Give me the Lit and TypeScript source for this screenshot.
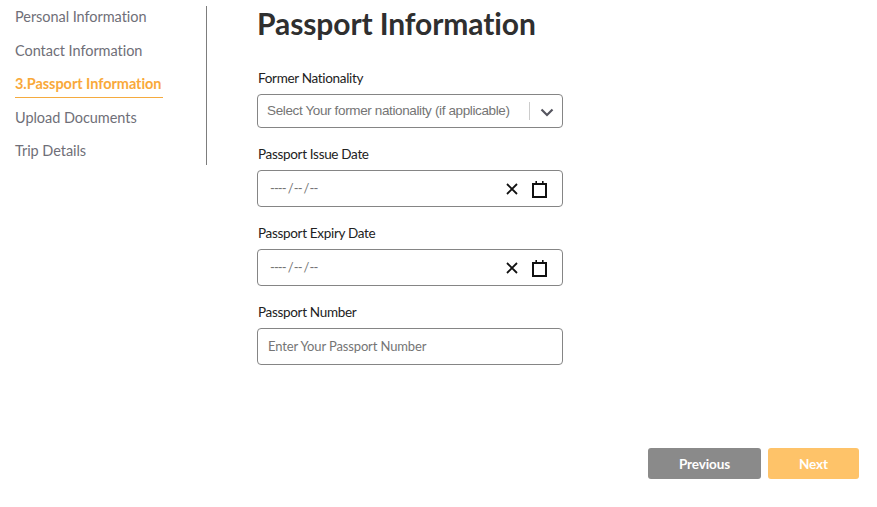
import { LitElement, html, css } from "lit";
import { customElement } from "lit/decorators.js";

const dateField = html`
  <span class="ph">----<span class="sl">/</span>--<span class="sl">/</span>--</span>
  <svg class="x" width="12" height="12" viewBox="0 0 12 12"><path d="M1 1l10 10M11 1L1 11" stroke="#111" stroke-width="1.8" fill="none"/></svg>
  <svg class="cal" width="15" height="17" viewBox="0 0 15 17"><path d="M1 3h13v13H1z" stroke="#111" stroke-width="2" fill="none"/><path d="M4.2 0v3M10.8 0v3" stroke="#111" stroke-width="1.6" fill="none"/></svg>
`;

@customElement("app-root")
export class AppRoot extends LitElement {
  static styles = css`
    :host { display: block; width: 877px; height: 507px; background: #fff; font-family: Lato, sans-serif; overflow: hidden; }
    .page { display: flex; align-items: flex-start; padding: 6px 0 0 0; height: 501px; box-sizing: border-box; }
    .side { width: 207px; height: 159px; box-sizing: border-box; border-right: 1px solid #7d7d7d; padding: 0 0 0 15px; display: flex; flex-direction: column; flex: none; }
    .step { flex: none; height: 33.5px; line-height: 21px; font-size: 14.5px; letter-spacing: -0.05px; color: #6f6f78; white-space: nowrap; }
    .step.on { color: #f9a93a; font-weight: 700; width: 148px; box-sizing: border-box; height: 25px; border-bottom: 1px solid #f5ab3f; margin-bottom: 8.5px; }
    .main { margin-left: 50px; width: 306px; flex: none; display: flex; flex-direction: column; }
    h1 { margin: -2px 0 0; font-size: 30px; font-weight: 700; letter-spacing: -0.1px; color: #2f2f2f; line-height: 38px; white-space: nowrap; }
    label { display: block; font-size: 13.5px; letter-spacing: -0.32px; line-height: 18px; color: #222; padding-left: 1px; }
    .l1 { margin-top: 27px; margin-bottom: 7px; }
    .l2 { margin-top: 17px; margin-bottom: 7px; }
    .l3 { margin-top: 17px; margin-bottom: 7px; }
    .box { box-sizing: border-box; width: 306px; border: 1px solid #858585; border-radius: 4px; display: flex; align-items: center; background: #fff; }
    .ph { color: #757575; white-space: nowrap; padding-bottom: 2px; }
    .select { height: 34px; padding-left: 9px; }
    .select .ph { flex: 1; font-family: "Liberation Sans", sans-serif; font-size: 13.5px; letter-spacing: -0.37px; }
    .sep { width: 1px; height: 18px; background: #ccc; margin-right: 10px; }
    .chev { margin-right: 8px; margin-top: 2px; }
    .date { height: 37px; padding-left: 12px; }
    .date .ph { flex: 1; font-size: 13px; letter-spacing: -0.9px; }
    .sl { margin: 0 1px 0 2px; }
    .x { margin-right: 14px; margin-top: 1px; }
    .cal { margin-right: 15px; margin-top: 1px; }
    .text { height: 37px; padding-left: 10px; }
    .text .ph { font-size: 13px; letter-spacing: -0.13px; }
    .actions { position: absolute; left: 648px; top: 448px; display: flex; gap: 7px; }
    button { border: 0; height: 31px; border-radius: 3px; color: #fff; font: 700 13.5px Lato, sans-serif; letter-spacing: -0.1px; padding: 0; }
    .prev { width: 113px; background: #8a8a8a; }
    .next { width: 91px; background: #fec369; }
  `;

  render() {
    return html`
      <div class="page">
        <nav class="side">
          <div class="step">Personal Information</div>
          <div class="step">Contact Information</div>
          <div class="step on">3.Passport Information</div>
          <div class="step">Upload Documents</div>
          <div class="step">Trip Details</div>
        </nav>
        <main class="main">
          <h1>Passport Information</h1>
          <label class="l1">Former Nationality</label>
          <div class="box select">
            <span class="ph">Select Your former nationality (if applicable)</span>
            <span class="sep"></span>
            <svg class="chev" width="14" height="9" viewBox="0 0 14 9"><path d="M1.5 1.5L7 7l5.5-5.5" stroke="#55555f" stroke-width="2.2" fill="none"/></svg>
          </div>
          <label class="l2">Passport Issue Date</label>
          <div class="box date">${dateField}</div>
          <label class="l3">Passport Expiry Date</label>
          <div class="box date">${dateField}</div>
          <label class="l3">Passport Number</label>
          <div class="box text"><span class="ph">Enter Your Passport Number</span></div>
        </main>
      </div>
      <div class="actions">
        <button class="prev">Previous</button>
        <button class="next">Next</button>
      </div>
    `;
  }
}
